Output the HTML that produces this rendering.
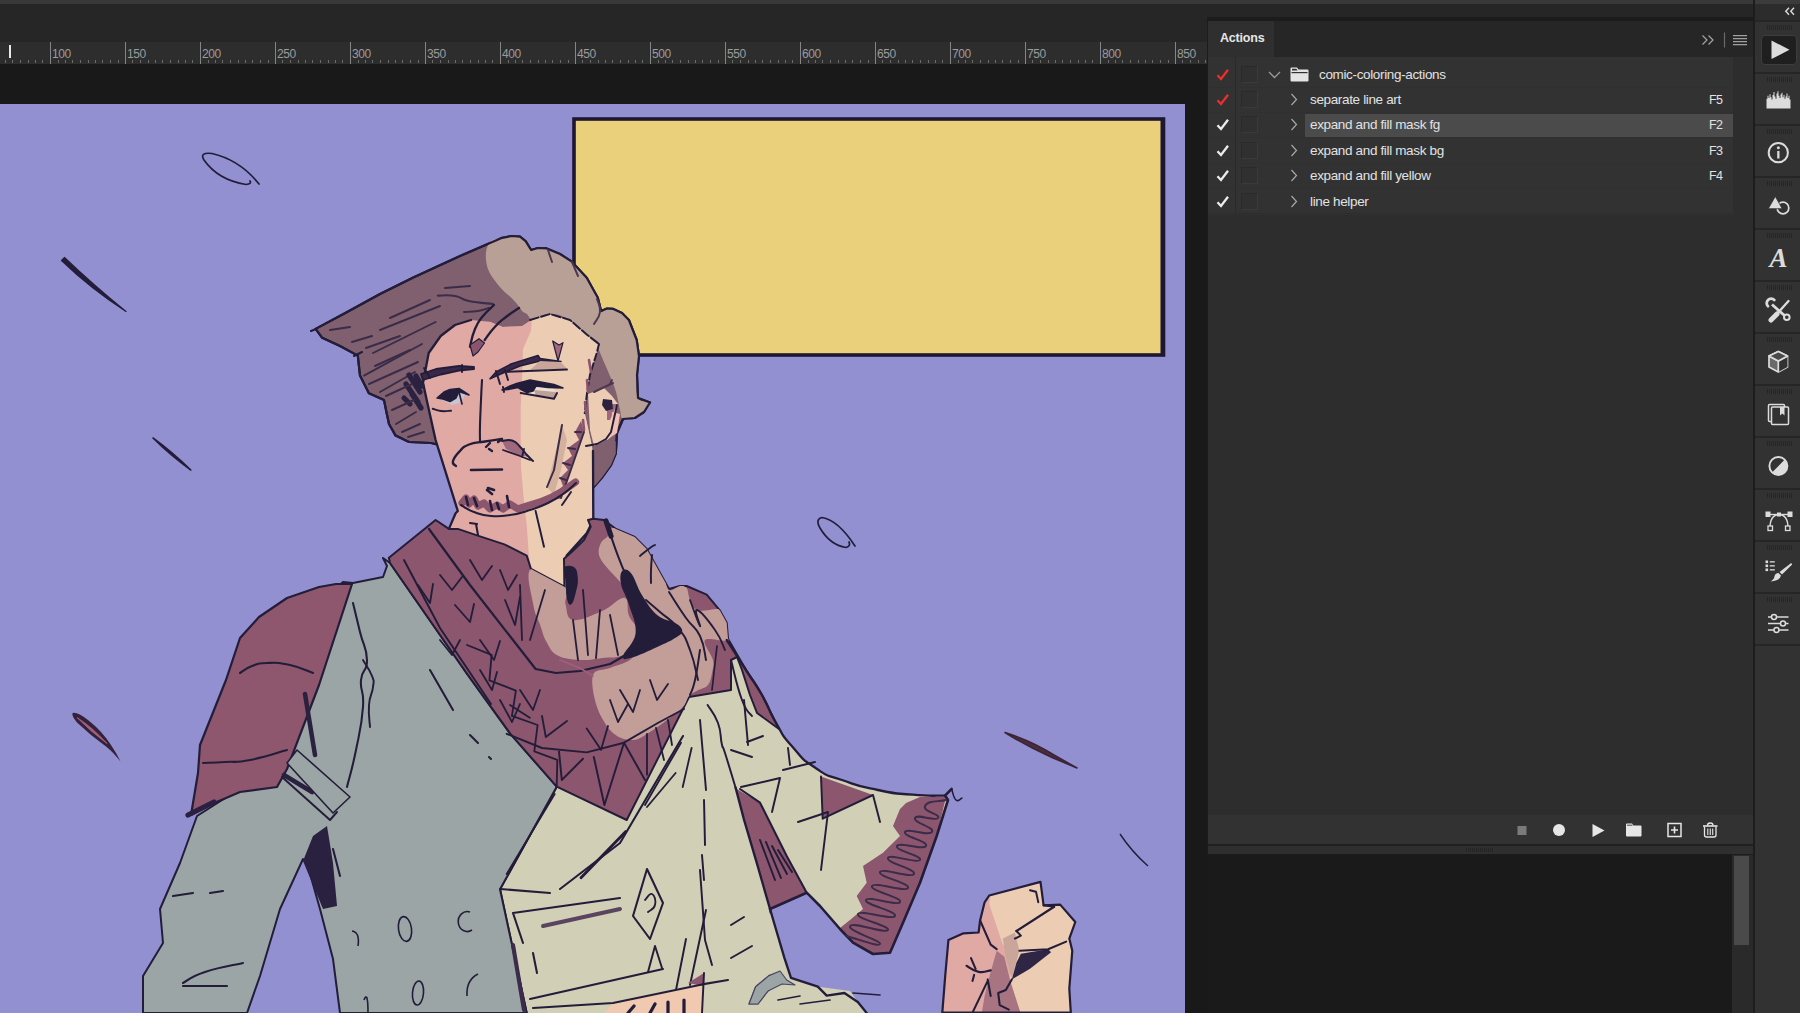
<!DOCTYPE html>
<html><head><meta charset="utf-8"><title>Actions</title>
<style>
*{box-sizing:border-box;margin:0;padding:0}
html,body{width:1800px;height:1013px;overflow:hidden;background:#262626;font-family:"Liberation Sans",sans-serif;}
.abs{position:absolute}
#root{position:relative;width:1800px;height:1013px;overflow:hidden;background:#262626}
#topstrip{left:0;top:0;width:1800px;height:4px;background:#393939}
#ruler{left:0;top:42px;width:1208px;height:22px;background:#2d2d2d;overflow:hidden}
#ruler .t{position:absolute;top:0px;width:1px;height:22px;background:#858585}
#ruler .n{position:absolute;top:5px;font-size:12px;color:#9c9c9c;letter-spacing:-0.4px;line-height:14px}
#ruler .dots{position:absolute;left:0;top:19px;width:1208px;height:2px}
#dark{left:0;top:64px;width:1208px;height:949px;background:#191919}
#canvas{left:0;top:104px;width:1185px;height:909px;background:#9290d1;overflow:hidden}
#panel{left:1208px;top:18px;width:1546px;height:836px}
</style></head><body><div id="root">
<div id="topstrip" class="abs"></div>
<div id="ruler" class="abs"><div class="abs" style="left:9px;top:3px;width:2px;height:13px;background:#e8e8e8"></div><div class="t" style="left:50px"></div><div class="n" style="left:52px">100</div><div class="t" style="left:125px"></div><div class="n" style="left:127px">150</div><div class="t" style="left:200px"></div><div class="n" style="left:202px">200</div><div class="t" style="left:275px"></div><div class="n" style="left:277px">250</div><div class="t" style="left:350px"></div><div class="n" style="left:352px">300</div><div class="t" style="left:425px"></div><div class="n" style="left:427px">350</div><div class="t" style="left:500px"></div><div class="n" style="left:502px">400</div><div class="t" style="left:575px"></div><div class="n" style="left:577px">450</div><div class="t" style="left:650px"></div><div class="n" style="left:652px">500</div><div class="t" style="left:725px"></div><div class="n" style="left:727px">550</div><div class="t" style="left:800px"></div><div class="n" style="left:802px">600</div><div class="t" style="left:875px"></div><div class="n" style="left:877px">650</div><div class="t" style="left:950px"></div><div class="n" style="left:952px">700</div><div class="t" style="left:1025px"></div><div class="n" style="left:1027px">750</div><div class="t" style="left:1100px"></div><div class="n" style="left:1102px">800</div><div class="t" style="left:1175px"></div><div class="n" style="left:1177px">850</div><div class="abs" style="left:5px;top:18px;width:1px;height:3px;background:#6c6c6c"></div><div class="abs" style="left:12px;top:18px;width:1px;height:3px;background:#6c6c6c"></div><div class="abs" style="left:20px;top:18px;width:1px;height:3px;background:#6c6c6c"></div><div class="abs" style="left:28px;top:18px;width:1px;height:3px;background:#6c6c6c"></div><div class="abs" style="left:35px;top:18px;width:1px;height:3px;background:#6c6c6c"></div><div class="abs" style="left:42px;top:18px;width:1px;height:3px;background:#6c6c6c"></div><div class="abs" style="left:58px;top:18px;width:1px;height:3px;background:#6c6c6c"></div><div class="abs" style="left:65px;top:18px;width:1px;height:3px;background:#6c6c6c"></div><div class="abs" style="left:72px;top:18px;width:1px;height:3px;background:#6c6c6c"></div><div class="abs" style="left:80px;top:18px;width:1px;height:3px;background:#6c6c6c"></div><div class="abs" style="left:88px;top:18px;width:1px;height:3px;background:#6c6c6c"></div><div class="abs" style="left:95px;top:18px;width:1px;height:3px;background:#6c6c6c"></div><div class="abs" style="left:102px;top:18px;width:1px;height:3px;background:#6c6c6c"></div><div class="abs" style="left:110px;top:18px;width:1px;height:3px;background:#6c6c6c"></div><div class="abs" style="left:118px;top:18px;width:1px;height:3px;background:#6c6c6c"></div><div class="abs" style="left:132px;top:18px;width:1px;height:3px;background:#6c6c6c"></div><div class="abs" style="left:140px;top:18px;width:1px;height:3px;background:#6c6c6c"></div><div class="abs" style="left:148px;top:18px;width:1px;height:3px;background:#6c6c6c"></div><div class="abs" style="left:155px;top:18px;width:1px;height:3px;background:#6c6c6c"></div><div class="abs" style="left:162px;top:18px;width:1px;height:3px;background:#6c6c6c"></div><div class="abs" style="left:170px;top:18px;width:1px;height:3px;background:#6c6c6c"></div><div class="abs" style="left:178px;top:18px;width:1px;height:3px;background:#6c6c6c"></div><div class="abs" style="left:185px;top:18px;width:1px;height:3px;background:#6c6c6c"></div><div class="abs" style="left:192px;top:18px;width:1px;height:3px;background:#6c6c6c"></div><div class="abs" style="left:208px;top:18px;width:1px;height:3px;background:#6c6c6c"></div><div class="abs" style="left:215px;top:18px;width:1px;height:3px;background:#6c6c6c"></div><div class="abs" style="left:222px;top:18px;width:1px;height:3px;background:#6c6c6c"></div><div class="abs" style="left:230px;top:18px;width:1px;height:3px;background:#6c6c6c"></div><div class="abs" style="left:238px;top:18px;width:1px;height:3px;background:#6c6c6c"></div><div class="abs" style="left:245px;top:18px;width:1px;height:3px;background:#6c6c6c"></div><div class="abs" style="left:252px;top:18px;width:1px;height:3px;background:#6c6c6c"></div><div class="abs" style="left:260px;top:18px;width:1px;height:3px;background:#6c6c6c"></div><div class="abs" style="left:268px;top:18px;width:1px;height:3px;background:#6c6c6c"></div><div class="abs" style="left:282px;top:18px;width:1px;height:3px;background:#6c6c6c"></div><div class="abs" style="left:290px;top:18px;width:1px;height:3px;background:#6c6c6c"></div><div class="abs" style="left:298px;top:18px;width:1px;height:3px;background:#6c6c6c"></div><div class="abs" style="left:305px;top:18px;width:1px;height:3px;background:#6c6c6c"></div><div class="abs" style="left:312px;top:18px;width:1px;height:3px;background:#6c6c6c"></div><div class="abs" style="left:320px;top:18px;width:1px;height:3px;background:#6c6c6c"></div><div class="abs" style="left:328px;top:18px;width:1px;height:3px;background:#6c6c6c"></div><div class="abs" style="left:335px;top:18px;width:1px;height:3px;background:#6c6c6c"></div><div class="abs" style="left:342px;top:18px;width:1px;height:3px;background:#6c6c6c"></div><div class="abs" style="left:358px;top:18px;width:1px;height:3px;background:#6c6c6c"></div><div class="abs" style="left:365px;top:18px;width:1px;height:3px;background:#6c6c6c"></div><div class="abs" style="left:372px;top:18px;width:1px;height:3px;background:#6c6c6c"></div><div class="abs" style="left:380px;top:18px;width:1px;height:3px;background:#6c6c6c"></div><div class="abs" style="left:388px;top:18px;width:1px;height:3px;background:#6c6c6c"></div><div class="abs" style="left:395px;top:18px;width:1px;height:3px;background:#6c6c6c"></div><div class="abs" style="left:402px;top:18px;width:1px;height:3px;background:#6c6c6c"></div><div class="abs" style="left:410px;top:18px;width:1px;height:3px;background:#6c6c6c"></div><div class="abs" style="left:418px;top:18px;width:1px;height:3px;background:#6c6c6c"></div><div class="abs" style="left:432px;top:18px;width:1px;height:3px;background:#6c6c6c"></div><div class="abs" style="left:440px;top:18px;width:1px;height:3px;background:#6c6c6c"></div><div class="abs" style="left:448px;top:18px;width:1px;height:3px;background:#6c6c6c"></div><div class="abs" style="left:455px;top:18px;width:1px;height:3px;background:#6c6c6c"></div><div class="abs" style="left:462px;top:18px;width:1px;height:3px;background:#6c6c6c"></div><div class="abs" style="left:470px;top:18px;width:1px;height:3px;background:#6c6c6c"></div><div class="abs" style="left:478px;top:18px;width:1px;height:3px;background:#6c6c6c"></div><div class="abs" style="left:485px;top:18px;width:1px;height:3px;background:#6c6c6c"></div><div class="abs" style="left:492px;top:18px;width:1px;height:3px;background:#6c6c6c"></div><div class="abs" style="left:508px;top:18px;width:1px;height:3px;background:#6c6c6c"></div><div class="abs" style="left:515px;top:18px;width:1px;height:3px;background:#6c6c6c"></div><div class="abs" style="left:522px;top:18px;width:1px;height:3px;background:#6c6c6c"></div><div class="abs" style="left:530px;top:18px;width:1px;height:3px;background:#6c6c6c"></div><div class="abs" style="left:538px;top:18px;width:1px;height:3px;background:#6c6c6c"></div><div class="abs" style="left:545px;top:18px;width:1px;height:3px;background:#6c6c6c"></div><div class="abs" style="left:552px;top:18px;width:1px;height:3px;background:#6c6c6c"></div><div class="abs" style="left:560px;top:18px;width:1px;height:3px;background:#6c6c6c"></div><div class="abs" style="left:568px;top:18px;width:1px;height:3px;background:#6c6c6c"></div><div class="abs" style="left:582px;top:18px;width:1px;height:3px;background:#6c6c6c"></div><div class="abs" style="left:590px;top:18px;width:1px;height:3px;background:#6c6c6c"></div><div class="abs" style="left:598px;top:18px;width:1px;height:3px;background:#6c6c6c"></div><div class="abs" style="left:605px;top:18px;width:1px;height:3px;background:#6c6c6c"></div><div class="abs" style="left:612px;top:18px;width:1px;height:3px;background:#6c6c6c"></div><div class="abs" style="left:620px;top:18px;width:1px;height:3px;background:#6c6c6c"></div><div class="abs" style="left:628px;top:18px;width:1px;height:3px;background:#6c6c6c"></div><div class="abs" style="left:635px;top:18px;width:1px;height:3px;background:#6c6c6c"></div><div class="abs" style="left:642px;top:18px;width:1px;height:3px;background:#6c6c6c"></div><div class="abs" style="left:658px;top:18px;width:1px;height:3px;background:#6c6c6c"></div><div class="abs" style="left:665px;top:18px;width:1px;height:3px;background:#6c6c6c"></div><div class="abs" style="left:672px;top:18px;width:1px;height:3px;background:#6c6c6c"></div><div class="abs" style="left:680px;top:18px;width:1px;height:3px;background:#6c6c6c"></div><div class="abs" style="left:688px;top:18px;width:1px;height:3px;background:#6c6c6c"></div><div class="abs" style="left:695px;top:18px;width:1px;height:3px;background:#6c6c6c"></div><div class="abs" style="left:702px;top:18px;width:1px;height:3px;background:#6c6c6c"></div><div class="abs" style="left:710px;top:18px;width:1px;height:3px;background:#6c6c6c"></div><div class="abs" style="left:718px;top:18px;width:1px;height:3px;background:#6c6c6c"></div><div class="abs" style="left:732px;top:18px;width:1px;height:3px;background:#6c6c6c"></div><div class="abs" style="left:740px;top:18px;width:1px;height:3px;background:#6c6c6c"></div><div class="abs" style="left:748px;top:18px;width:1px;height:3px;background:#6c6c6c"></div><div class="abs" style="left:755px;top:18px;width:1px;height:3px;background:#6c6c6c"></div><div class="abs" style="left:762px;top:18px;width:1px;height:3px;background:#6c6c6c"></div><div class="abs" style="left:770px;top:18px;width:1px;height:3px;background:#6c6c6c"></div><div class="abs" style="left:778px;top:18px;width:1px;height:3px;background:#6c6c6c"></div><div class="abs" style="left:785px;top:18px;width:1px;height:3px;background:#6c6c6c"></div><div class="abs" style="left:792px;top:18px;width:1px;height:3px;background:#6c6c6c"></div><div class="abs" style="left:808px;top:18px;width:1px;height:3px;background:#6c6c6c"></div><div class="abs" style="left:815px;top:18px;width:1px;height:3px;background:#6c6c6c"></div><div class="abs" style="left:822px;top:18px;width:1px;height:3px;background:#6c6c6c"></div><div class="abs" style="left:830px;top:18px;width:1px;height:3px;background:#6c6c6c"></div><div class="abs" style="left:838px;top:18px;width:1px;height:3px;background:#6c6c6c"></div><div class="abs" style="left:845px;top:18px;width:1px;height:3px;background:#6c6c6c"></div><div class="abs" style="left:852px;top:18px;width:1px;height:3px;background:#6c6c6c"></div><div class="abs" style="left:860px;top:18px;width:1px;height:3px;background:#6c6c6c"></div><div class="abs" style="left:868px;top:18px;width:1px;height:3px;background:#6c6c6c"></div><div class="abs" style="left:882px;top:18px;width:1px;height:3px;background:#6c6c6c"></div><div class="abs" style="left:890px;top:18px;width:1px;height:3px;background:#6c6c6c"></div><div class="abs" style="left:898px;top:18px;width:1px;height:3px;background:#6c6c6c"></div><div class="abs" style="left:905px;top:18px;width:1px;height:3px;background:#6c6c6c"></div><div class="abs" style="left:912px;top:18px;width:1px;height:3px;background:#6c6c6c"></div><div class="abs" style="left:920px;top:18px;width:1px;height:3px;background:#6c6c6c"></div><div class="abs" style="left:928px;top:18px;width:1px;height:3px;background:#6c6c6c"></div><div class="abs" style="left:935px;top:18px;width:1px;height:3px;background:#6c6c6c"></div><div class="abs" style="left:942px;top:18px;width:1px;height:3px;background:#6c6c6c"></div><div class="abs" style="left:958px;top:18px;width:1px;height:3px;background:#6c6c6c"></div><div class="abs" style="left:965px;top:18px;width:1px;height:3px;background:#6c6c6c"></div><div class="abs" style="left:972px;top:18px;width:1px;height:3px;background:#6c6c6c"></div><div class="abs" style="left:980px;top:18px;width:1px;height:3px;background:#6c6c6c"></div><div class="abs" style="left:988px;top:18px;width:1px;height:3px;background:#6c6c6c"></div><div class="abs" style="left:995px;top:18px;width:1px;height:3px;background:#6c6c6c"></div><div class="abs" style="left:1002px;top:18px;width:1px;height:3px;background:#6c6c6c"></div><div class="abs" style="left:1010px;top:18px;width:1px;height:3px;background:#6c6c6c"></div><div class="abs" style="left:1018px;top:18px;width:1px;height:3px;background:#6c6c6c"></div><div class="abs" style="left:1032px;top:18px;width:1px;height:3px;background:#6c6c6c"></div><div class="abs" style="left:1040px;top:18px;width:1px;height:3px;background:#6c6c6c"></div><div class="abs" style="left:1048px;top:18px;width:1px;height:3px;background:#6c6c6c"></div><div class="abs" style="left:1055px;top:18px;width:1px;height:3px;background:#6c6c6c"></div><div class="abs" style="left:1062px;top:18px;width:1px;height:3px;background:#6c6c6c"></div><div class="abs" style="left:1070px;top:18px;width:1px;height:3px;background:#6c6c6c"></div><div class="abs" style="left:1078px;top:18px;width:1px;height:3px;background:#6c6c6c"></div><div class="abs" style="left:1085px;top:18px;width:1px;height:3px;background:#6c6c6c"></div><div class="abs" style="left:1092px;top:18px;width:1px;height:3px;background:#6c6c6c"></div><div class="abs" style="left:1108px;top:18px;width:1px;height:3px;background:#6c6c6c"></div><div class="abs" style="left:1115px;top:18px;width:1px;height:3px;background:#6c6c6c"></div><div class="abs" style="left:1122px;top:18px;width:1px;height:3px;background:#6c6c6c"></div><div class="abs" style="left:1130px;top:18px;width:1px;height:3px;background:#6c6c6c"></div><div class="abs" style="left:1138px;top:18px;width:1px;height:3px;background:#6c6c6c"></div><div class="abs" style="left:1145px;top:18px;width:1px;height:3px;background:#6c6c6c"></div><div class="abs" style="left:1152px;top:18px;width:1px;height:3px;background:#6c6c6c"></div><div class="abs" style="left:1160px;top:18px;width:1px;height:3px;background:#6c6c6c"></div><div class="abs" style="left:1168px;top:18px;width:1px;height:3px;background:#6c6c6c"></div><div class="abs" style="left:1182px;top:18px;width:1px;height:3px;background:#6c6c6c"></div><div class="abs" style="left:1190px;top:18px;width:1px;height:3px;background:#6c6c6c"></div><div class="abs" style="left:1198px;top:18px;width:1px;height:3px;background:#6c6c6c"></div><div class="abs" style="left:1205px;top:18px;width:1px;height:3px;background:#6c6c6c"></div></div>
<div id="dark" class="abs"></div>
<div id="canvas" class="abs"><svg width="1185" height="909" viewBox="0 104 1185 909" style="position:absolute;left:0;top:0">
<rect x="574" y="119" width="589.5" height="236" fill="#ebd07b" stroke="#1d1733" stroke-width="3.6"/><rect x="1160.5" y="119" width="4.5" height="236" fill="#1d1733"/>
<path d="M556.7 786.7L500 889.3L526.7 1013L866 1013L850 991L813 986L786.7 976L770 909L806.7 892.7L840 929L873 953L890 953L920 883L947 803L945.0 795.6C934.3 795.3 935.4 796.6 913.0 794.7C890.6 792.8 901.5 794.9 877.8 790.0C854.1 785.1 862.7 787.3 842.0 780.0C821.3 772.7 832.1 779.1 815.6 768.0C799.1 756.9 805.5 761.5 792.4 746.7C779.3 731.9 786.5 740.8 776.4 723.6C766.3 706.4 772.1 712.9 762.0 695.0C751.9 677.1 757.8 688.3 746.0 670.0C734.2 651.7 733.1 650.0 726.7 640.0L700 680L683 706.7L626.7 820Z" fill="#d1cfb6"/>
<polyline points="556.7,786.7 500.0,889.3 526.7,1013.0" fill="none" stroke="#231d3a" stroke-width="2.08" stroke-linecap="round" stroke-linejoin="round" />
<polygon points="390.0,563.0 466.7,673.3 510.0,733.3 556.7,786.7 500.0,889.3 526.7,1013.0 340.0,1013.0 333.0,959.0 320.0,909.0 307.0,863.0 303.0,859.0 280.0,909.0 260.0,976.0 247.0,1013.0 143.0,1013.0 143.0,976.0 163.0,943.0 160.0,909.0 180.0,863.0 197.0,816.0 230.0,795.0 300.0,620.0 343.0,582.0 353.0,583.0 383.0,577.0 387.0,566.0 383.0,558.0" fill="#9ba5a5" stroke="#231d3a" stroke-width="2" stroke-linejoin="round" />
<polygon points="327.0,826.0 333.0,863.0 337.0,906.0 323.0,909.0 303.0,861.0 313.0,836.0" fill="#2a2140" />
<polygon points="352.0,584.0 336.0,584.0 319.0,587.0 287.0,598.0 259.0,617.0 240.0,638.0 226.0,680.0 212.0,715.0 200.0,745.0 198.0,773.0 191.0,815.0 212.0,804.0 240.0,792.0 277.0,787.0 287.0,769.0 319.0,685.0" fill="#8e576d" stroke="#231d3a" stroke-width="2.2" stroke-linejoin="round" />
<path d="M240.0 673.0C243.2 671.1 244.8 668.7 252.0 666.0C259.2 663.3 256.9 663.3 267.0 663.0C277.1 662.7 277.7 662.3 290.0 665.0C302.3 667.7 306.9 670.9 313.0 673.0" fill="none" stroke="#231d3a" stroke-width="2.08" stroke-linecap="round" stroke-linejoin="round" />
<path d="M203.0 763.0C208.9 762.7 212.5 762.8 225.0 762.0C237.5 761.2 233.5 763.2 250.0 760.0C266.5 756.8 277.1 752.7 287.0 750.0" fill="none" stroke="#231d3a" stroke-width="2.08" stroke-linecap="round" stroke-linejoin="round" />
<path d="M188.0 815.0L214.0 802.0" fill="none" stroke="#2a2140" stroke-width="5.2" stroke-linecap="round"/>
<path d="M305.0 694.0L315.0 755.0M284.0 775.0L312.0 792.0" fill="none" stroke="#2a2140" stroke-width="4.55" stroke-linecap="round"/>
<polygon points="297.0,750.0 350.0,797.0 333.0,813.0 287.0,763.0" fill="#9ba5a5" stroke="#231d3a" stroke-width="1.6" stroke-linejoin="round" />
<path d="M282.0 777.0L330.0 820.0M330.0 820.0L337.0 812.0" fill="none" stroke="#231d3a" stroke-width="1.9500000000000002" stroke-linecap="round"/>
<path d="M353.0 603.0C354.9 610.7 356.3 616.8 360.0 632.0C363.7 647.2 366.7 647.2 367.0 660.0C367.3 672.8 362.1 667.5 361.0 680.0C359.9 692.5 364.3 688.3 363.0 707.0C361.7 725.7 360.3 728.7 356.0 750.0C351.7 771.3 349.4 777.1 347.0 787.0" fill="none" stroke="#231d3a" stroke-width="2.08" stroke-linecap="round" stroke-linejoin="round" />
<path d="M363.0 660.0C365.4 664.3 369.3 668.8 372.0 676.0C374.7 683.2 373.8 679.3 373.0 687.0C372.2 694.7 369.8 694.3 369.0 705.0C368.2 715.7 369.7 721.1 370.0 727.0" fill="none" stroke="#231d3a" stroke-width="1.9500000000000002" stroke-linecap="round" stroke-linejoin="round" />
<path d="M430.0 670.0L453.0 710.0M470.0 735.0L478.0 743.0M489.0 757.0L491.0 759.0M333.0 849.0L340.0 876.0" fill="none" stroke="#231d3a" stroke-width="2.08" stroke-linecap="round"/>
<path d="M173.0 896.0L193.0 893.0M210.0 893.0L223.0 891.0M183.0 986.0L227.0 986.0" fill="none" stroke="#231d3a" stroke-width="2.08" stroke-linecap="round"/>
<path d="M183.0 983.0C188.9 980.1 189.0 977.3 205.0 972.0C221.0 966.7 232.9 965.4 243.0 963.0" fill="none" stroke="#231d3a" stroke-width="2.08" stroke-linecap="round" stroke-linejoin="round" />
<g fill="none" stroke="#231d3a" stroke-width="1.600"><ellipse cx="405" cy="929" rx="6.500" ry="12.500" transform="rotate(-8 405 929)"/><ellipse cx="418" cy="993" rx="5.500" ry="12" transform="rotate(5 418 993)"/><path d="M470 912 A9 10 0 1 0 472 930"/><path d="M478 974 Q466 980 467 996"/><path d="M352 931 Q360 932 358 946"/><path d="M364 1000 Q368 990 368 1013"/></g>
<polygon points="315.6,328.9 346.7,312.3 380.0,294.0 413.3,277.5 460.0,256.0 502.2,237.8 512.0,236.0 520.0,236.7 525.6,241.1 531.1,250.0 538.0,248.0 546.7,248.4 560.0,254.0 571.1,261.1 586.7,277.8 597.8,297.8 601.1,311.1 607.0,308.5 613.3,308.9 622.0,313.0 628.9,320.0 636.7,340.0 639.0,356.0 637.0,375.0 638.0,398.0 650.0,402.5 644.0,412.0 634.8,418.0 623.0,419.0 617.0,433.0 615.8,453.5 611.0,465.0 601.6,478.0 592.0,489.0 500.0,460.0 431.0,443.0 409.0,442.0 395.6,435.6 389.0,424.0 386.0,410.0 384.0,400.0 368.9,393.3 360.0,375.6 357.8,355.6 340.0,346.0 322.2,337.8" fill="#80606e" stroke="#231d3a" stroke-width="2.2" stroke-linejoin="round" />
<path d="M488.9 243.3C492.0 238.0 497.6 239.3 502.2 237.8C506.8 236.3 508.4 236.2 512.0 236.0C515.6 235.8 517.3 235.7 520.0 236.7C522.7 237.7 523.4 238.4 525.6 241.1C527.8 243.8 528.6 248.6 531.1 250.0C533.6 251.4 534.9 248.3 538.0 248.0C541.1 247.7 542.3 247.2 546.7 248.4C551.1 249.6 555.1 251.5 560.0 254.0C564.9 256.5 565.8 256.3 571.1 261.1C576.4 265.9 581.4 270.5 586.7 277.8C592.0 285.1 594.9 291.1 597.8 297.8C600.7 304.5 599.3 309.0 601.1 311.1C602.9 313.2 604.6 308.9 607.0 308.5C609.4 308.1 610.3 308.0 613.3 308.9C616.3 309.8 618.9 310.8 622.0 313.0C625.1 315.2 626.0 314.6 628.9 320.0C631.8 325.4 634.7 332.8 636.7 340.0C638.7 347.2 638.9 349.0 639.0 356.0C639.1 363.0 637.2 366.6 637.0 375.0C636.8 383.4 635.4 392.5 638.0 398.0C640.6 403.5 648.8 399.7 650.0 402.5C651.2 405.3 647.0 408.9 644.0 412.0C641.0 415.1 639.0 416.6 634.8 418.0C630.6 419.4 626.0 420.6 623.0 419.0C620.0 417.4 621.4 415.4 620.0 410.0C618.6 404.6 618.0 398.8 616.0 392.0C614.0 385.2 613.4 384.4 610.0 376.0C606.6 367.6 601.2 356.4 599.0 350.0C596.8 343.6 601.4 347.1 599.0 344.0C596.6 340.9 592.8 339.5 587.0 334.7C581.2 329.9 577.4 324.1 570.0 320.0C562.6 315.9 558.0 314.0 550.0 314.0C542.0 314.0 534.7 319.2 530.0 320.0C525.3 320.8 529.6 321.4 526.7 317.8C523.8 314.2 521.4 308.9 515.6 302.2C509.8 295.5 503.6 292.0 497.8 284.4C492.0 276.8 488.5 272.6 486.7 264.4C484.9 256.2 485.8 248.6 488.9 243.3Z" fill="#b9a096" />
<polygon points="315.6,328.9 346.7,312.3 380.0,294.0 413.3,277.5 460.0,256.0 502.2,237.8 512.0,236.0 520.0,236.7 525.6,241.1 531.1,250.0 538.0,248.0 546.7,248.4 560.0,254.0 571.1,261.1 586.7,277.8 597.8,297.8 601.1,311.1 607.0,308.5 613.3,308.9 622.0,313.0 628.9,320.0 636.7,340.0 639.0,356.0 637.0,375.0 638.0,398.0 650.0,402.5 644.0,412.0 634.8,418.0 623.0,419.0 617.0,433.0 615.8,453.5 611.0,465.0 601.6,478.0 592.0,489.0 500.0,460.0 431.0,443.0 409.0,442.0 395.6,435.6 389.0,424.0 386.0,410.0 384.0,400.0 368.9,393.3 360.0,375.6 357.8,355.6 340.0,346.0 322.2,337.8" fill="none" stroke="#231d3a" stroke-width="2.2" stroke-linejoin="round" />
<clipPath id="fc"><polygon points="423.0,382.7 428.7,353.0 440.7,336.0 455.0,325.0 471.0,320.0 492.0,322.0 503.0,326.7 527.0,320.0 550.0,314.0 570.0,320.0 587.0,334.7 599.0,344.0 596.7,353.0 590.0,374.7 587.0,393.0 584.7,413.0 586.7,422.0 593.0,451.0 593.3,520.0 586.7,533.3 566.7,555.6 564.4,586.7 531.0,569.0 526.7,555.6 504.4,544.4 477.8,535.6 457.8,528.9 448.9,528.9 455.6,513.3 457.8,511.0 435.6,440.0 426.7,400.0"/></clipPath>
<polygon points="423.0,382.7 428.7,353.0 440.7,336.0 455.0,325.0 471.0,320.0 492.0,322.0 503.0,326.7 527.0,320.0 550.0,314.0 570.0,320.0 587.0,334.7 599.0,344.0 596.7,353.0 590.0,374.7 587.0,393.0 584.7,413.0 586.7,422.0 593.0,451.0 593.3,520.0 586.7,533.3 566.7,555.6 564.4,586.7 531.0,569.0 526.7,555.6 504.4,544.4 477.8,535.6 457.8,528.9 448.9,528.9 455.6,513.3 457.8,511.0 435.6,440.0 426.7,400.0" fill="#e0a9a4" />
<polygon points="532.0,316.0 531.0,330.7 523.0,349.0 522.0,380.0 520.7,406.7 520.7,433.0 521.0,466.7 524.4,506.7 526.7,524.4 528.9,555.6 531.0,569.0 570.0,595.0 610.0,560.0 610.0,310.0" fill="#eccdb4" clip-path="url(#fc)"/>
<polygon points="588.0,394.0 604.0,388.0 612.0,396.0 618.0,404.0 614.0,420.0 611.0,437.0 606.0,441.0 594.0,446.0 590.0,430.0" fill="#eccdb4" />
<polygon points="607.0,404.0 617.0,404.0 610.0,420.0 607.0,420.0" fill="#a0687c" />
<polygon points="612.0,412.0 620.0,414.0 617.0,433.0 611.0,437.0" fill="#f3bfb4" />
<polygon points="594.0,447.0 606.0,440.0 615.8,441.6 615.8,453.5 611.0,465.0 601.6,478.0 592.0,489.0 592.5,447.0" fill="#80606e" />
<polyline points="586.0,446.0 597.0,444.0 606.0,439.0 611.0,432.0 617.0,405.0" fill="none" stroke="#231d3a" stroke-width="1.9500000000000002" stroke-linecap="round" stroke-linejoin="round" />
<polygon points="603.0,399.0 612.0,400.0 613.0,409.0 606.0,411.0 602.0,405.0" fill="#2c2240" />
<polygon points="471.0,318.0 480.7,317.0 492.7,322.7 503.0,326.7 522.0,326.0 531.0,320.0 527.0,314.0 500.0,300.0 470.0,300.0" fill="#80606e" />
<polyline points="471.0,320.0 455.0,325.0 440.7,336.0 428.7,353.0 423.0,382.7 426.7,400.0 435.6,440.0 457.8,511.0 455.6,513.3 448.9,528.9" fill="none" stroke="#231d3a" stroke-width="2.3400000000000003" stroke-linecap="round" stroke-linejoin="round" />
<polyline points="530.0,320.0 550.0,314.0 570.0,320.0 587.0,334.7 599.0,344.0" fill="none" stroke="#231d3a" stroke-width="1.9500000000000002" stroke-linecap="round" stroke-linejoin="round" stroke-dasharray="9 2.5"/>
<polyline points="599.0,344.0 596.7,353.0 590.0,374.7 587.0,393.0 584.7,413.0" fill="none" stroke="#231d3a" stroke-width="1.9500000000000002" stroke-linecap="round" stroke-linejoin="round" stroke-dasharray="7 3"/>
<polyline points="593.0,451.0 593.3,520.0 586.7,533.3 566.7,555.6" fill="none" stroke="#231d3a" stroke-width="2.3400000000000003" stroke-linecap="round" stroke-linejoin="round" />
<path d="M437.8 295.6C442.4 295.7 446.7 294.6 455.0 296.0C463.3 297.4 458.8 298.9 468.9 301.0C479.0 303.1 486.6 303.2 493.0 304.0" fill="none" stroke="#3c2d4a" stroke-width="2.08" stroke-linecap="round" stroke-linejoin="round" />
<path d="M464.0 312.0C467.7 311.7 471.3 312.1 478.0 311.0C484.7 309.9 486.1 308.7 489.0 307.8" fill="none" stroke="#3c2d4a" stroke-width="1.8199999999999998" stroke-linecap="round" stroke-linejoin="round" />
<path d="M494.0 305.0C491.1 307.9 488.1 309.6 483.0 316.0C477.9 322.4 478.5 320.8 475.0 329.0C471.5 337.2 471.3 342.0 470.0 346.7" fill="none" stroke="#231d3a" stroke-width="2.3400000000000003" stroke-linecap="round" stroke-linejoin="round" />
<path d="M519.0 308.0C515.5 310.4 512.4 312.0 506.0 317.0C499.6 322.0 500.7 320.6 495.0 326.7C489.3 332.8 487.4 336.5 484.7 340.0" fill="none" stroke="#231d3a" stroke-width="2.3400000000000003" stroke-linecap="round" stroke-linejoin="round" />
<polygon points="470.0,345.0 479.0,338.7 484.5,343.0 478.0,352.0 473.0,356.0" fill="#8b566d" stroke="#231d3a" stroke-width="1.2" stroke-linejoin="round" />
<path d="M373.0 353.0L435.6 322.0M364.0 375.6L422.0 344.0M369.0 384.0L418.0 362.0M380.0 392.0L415.0 372.0M352.0 342.0L372.0 336.0M396.0 424.0L416.0 412.0M402.0 432.0L420.0 424.0M408.0 437.0L424.0 432.0" fill="none" stroke="#3a2c48" stroke-width="1.9500000000000002" stroke-linecap="round"/>
<path d="M409.0 375.0L420.0 392.0M406.0 384.0L418.0 402.0M412.0 394.0L421.0 408.0M404.0 398.0L410.0 404.0M416.0 376.0L422.0 386.0" fill="none" stroke="#2b2140" stroke-width="5.2" stroke-linecap="round"/>
<path d="M548.0 250.0L552.0 262.0M572.0 262.0L578.0 276.0" fill="none" stroke="#4a3850" stroke-width="1.9500000000000002" stroke-linecap="round"/>
<path d="M597.0 299.0C597.8 302.5 600.8 305.3 600.0 312.0C599.2 318.7 595.6 320.8 594.0 324.0" fill="none" stroke="#4a3850" stroke-width="1.9500000000000002" stroke-linecap="round" stroke-linejoin="round" />
<path d="M594.0 392.0L613.0 383.0M610.0 384.0L612.0 380.0" fill="none" stroke="#4a3850" stroke-width="1.9500000000000002" stroke-linecap="round"/>
<path d="M589.0 360.0L591.0 372.0M587.0 380.0L588.0 392.0M585.0 402.0L586.0 412.0M583.0 420.0L584.0 430.0" fill="none" stroke="#8b566d" stroke-width="2.6" stroke-linecap="round"/>
<path d="M421 374 L436 369 L459 366 L474 367 L474 369 L459 370.500 L441 374.500 L423 380 Z" fill="#3a2848" stroke="#231d3a" stroke-width="1.800" stroke-linejoin="round"/>
<path d="M424.0 368.0L430.0 378.0M462.0 365.0L462.0 372.0" fill="none" stroke="#231d3a" stroke-width="1.9500000000000002" stroke-linecap="round"/>
<path d="M490 378.700 L496 372 L511 364 L538 355.500 L540 358.500 L561 361.500 L540 361 L520 366 L503 373 Z" fill="#3a2848" stroke="#231d3a" stroke-width="1.600" stroke-linejoin="round"/>
<polygon points="540.0,361.0 561.0,362.0 567.0,369.0 530.0,370.0" fill="#c9a59a" />
<path d="M503.0 372.0L567.0 369.5M496.0 371.0L500.0 384.0M505.0 370.0L508.0 380.0" fill="none" stroke="#231d3a" stroke-width="1.9500000000000002" stroke-linecap="round"/>
<polygon points="552.7,341.0 558.0,361.0 563.0,342.7 559.0,345.0" fill="#a0687c" stroke="#231d3a" stroke-width="1.2" stroke-linejoin="round" />
<polygon points="440.0,398.0 447.0,391.5 459.0,389.5 466.0,394.0 460.0,403.0 452.0,405.0 444.0,401.0" fill="#c8c4d0" />
<path d="M437 398 L444 392 L450 389.500 L459 388.500 L469 395 L459 391.500 L456 398 L450 401.500 L443 399 Z" fill="#231d3a" stroke="#231d3a" stroke-width="1.500" stroke-linejoin="round"/>
<path d="M432.7 408.7C434.9 409.3 436.1 410.5 441.0 411.0C445.9 411.5 448.3 410.8 451.0 410.7" fill="none" stroke="#231d3a" stroke-width="1.9500000000000002" stroke-linecap="round" stroke-linejoin="round" />
<path d="M459.0 392.0L462.0 404.0" fill="none" stroke="#231d3a" stroke-width="1.6900000000000002" stroke-linecap="round"/>
<polygon points="523.0,386.0 534.0,383.0 552.0,386.5 556.0,392.5 540.0,396.0 528.0,394.0" fill="#e8e2d6" />
<polygon points="534.0,390.0 556.0,392.0 554.0,398.0 536.0,396.0" fill="#bfa096" />
<path d="M502 390 L510 386 L516.700 383.500 L530 380 L554 384.500 L563 388 L548 387.500 L536 386 L533 391 L527 392.500 L522 390 L518 387.500 L508 389.500 Z" fill="#231d3a" stroke="#231d3a" stroke-width="1.500" stroke-linejoin="round"/>
<path d="M520.7 393.0L554.0 398.7M554.0 398.7L557.0 393.0M503.0 387.0L504.0 392.0" fill="none" stroke="#231d3a" stroke-width="1.9500000000000002" stroke-linecap="round"/>
<path d="M482.0 380.0C481.7 385.3 481.5 388.0 481.0 400.0C480.5 412.0 480.3 414.1 480.0 425.0C479.7 435.9 480.0 436.7 480.0 441.0" fill="none" stroke="#231d3a" stroke-width="2.08" stroke-linecap="round" stroke-linejoin="round" />
<polygon points="502.0,441.0 512.0,440.5 520.0,446.7 529.0,457.0 518.0,455.0 506.0,449.0" fill="#a0687c" />
<path d="M456.0 466.0C455.2 464.7 451.9 465.0 453.0 461.0C454.1 457.0 455.7 455.4 460.0 451.0C464.3 446.6 462.3 447.0 469.0 444.5C475.7 442.0 476.2 443.0 485.0 441.5C493.8 440.0 497.5 439.7 502.0 439.0" fill="none" stroke="#231d3a" stroke-width="2.3400000000000003" stroke-linecap="round" stroke-linejoin="round" />
<path d="M502.0 439.0L498.0 442.0M490.0 443.0L486.0 447.0M489.0 449.0L492.0 451.0" fill="none" stroke="#231d3a" stroke-width="2.3400000000000003" stroke-linecap="round"/>
<path d="M502.0 441.0C504.7 440.9 507.2 439.0 512.0 440.5C516.8 442.0 516.0 442.8 520.0 446.7C524.0 450.6 523.5 451.2 527.0 455.0C530.5 458.8 531.4 459.4 533.0 461.0" fill="none" stroke="#231d3a" stroke-width="1.9500000000000002" stroke-linecap="round" stroke-linejoin="round" />
<path d="M503.0 450.0L520.0 456.0M520.0 456.0L530.0 460.0M524.0 449.0L522.0 457.0" fill="none" stroke="#231d3a" stroke-width="1.8199999999999998" stroke-linecap="round"/>
<path d="M471.0 470.0L502.0 469.5" fill="none" stroke="#231d3a" stroke-width="2.6" stroke-linecap="round"/>
<polygon points="562.0,425.0 567.0,440.0 561.0,470.0 554.0,495.0 547.0,487.0" fill="#d4b09e" />
<polygon points="581.0,421.0 584.0,432.0 561.0,498.5 553.0,500.0 556.0,492.0 563.0,486.0 560.0,478.0 568.0,470.0 563.0,463.0 572.0,456.0 568.0,448.0 579.0,440.0 575.0,432.0" fill="#8b566d" />
<path d="M562.0 425.0L554.0 470.0M554.0 470.0L547.0 487.0M584.0 432.0L561.0 498.0M575.0 432.0L581.0 432.0M568.0 448.0L575.0 449.0M563.0 463.0L570.0 465.0M560.0 478.0L566.0 480.0" fill="none" stroke="#3a2c48" stroke-width="1.9500000000000002" stroke-linecap="round"/>
<polyline points="462.0,503.0 466.0,498.0 469.0,504.0 474.0,499.0 478.0,506.0 484.0,503.0 490.0,509.0 497.0,505.0 503.0,509.0 510.0,504.0 518.0,509.0 527.0,506.0 540.0,502.0 552.0,497.0 563.0,491.0 575.6,482.0" fill="none" stroke="#8b566d" stroke-width="7.15" stroke-linecap="round" stroke-linejoin="round" />
<path d="M461.0 505.0C464.5 506.9 466.0 509.1 474.0 512.0C482.0 514.9 481.4 515.2 491.0 516.0C500.6 516.8 499.6 516.6 510.0 515.0C520.4 513.4 519.9 513.2 530.0 510.0C540.1 506.8 539.2 507.3 548.0 503.0C556.8 498.7 555.5 499.3 563.0 494.0C570.5 488.7 572.5 485.9 576.0 483.0" fill="none" stroke="#231d3a" stroke-width="2.08" stroke-linecap="round" stroke-linejoin="round" />
<path d="M466.0 497.0L468.0 505.0M474.0 498.0L477.0 506.0M490.0 501.0L492.0 510.0M497.0 503.0L499.0 509.0M507.0 496.0L509.0 507.0M487.0 490.0L492.0 494.0M488.0 488.0L494.0 490.0" fill="none" stroke="#231d3a" stroke-width="2.6" stroke-linecap="round"/>
<path d="M535.6 511.0L544.0 546.7M571.0 492.0L562.0 505.0" fill="none" stroke="#231d3a" stroke-width="1.9500000000000002" stroke-linecap="round"/>
<path d="M476.0 524.0L478.0 535.0M470.0 523.0L477.0 524.0" fill="none" stroke="#231d3a" stroke-width="2.08" stroke-linecap="round"/>
<path d="M390.0 318.0L430.0 300.0M380.0 330.0L440.0 306.0M366.0 348.0L400.0 336.0M375.0 366.0L410.0 350.0M386.0 396.0L412.0 384.0M392.0 410.0L414.0 400.0M445.0 288.0L470.0 286.0M330.0 330.0L350.0 327.0" fill="none" stroke="#3a2c48" stroke-width="1.9500000000000002" stroke-linecap="round"/>
<path d="M311.0 331.0L316.0 329.0M354.0 356.0L362.0 352.0" fill="none" stroke="#231d3a" stroke-width="2.08" stroke-linecap="round"/>
<polygon points="435.6,520.0 448.9,528.9 457.8,528.9 477.8,535.6 504.4,544.4 526.7,555.6 531.0,569.0 564.4,586.7 564.0,558.7 573.0,550.7 584.0,540.0 590.7,526.7 588.0,520.0 593.3,518.7 604.0,520.0 616.0,529.0 634.7,537.0 646.7,549.0 661.0,574.7 669.0,589.0 680.0,586.0 686.7,586.0 706.7,594.7 720.0,610.7 726.7,622.7 728.0,638.7 746.0,670.0 762.0,695.0 776.4,723.6 779.0,729.0 757.0,713.0 750.0,695.0 742.0,670.0 737.0,657.0 731.0,660.0 731.0,690.0 707.0,694.0 689.0,697.0 684.0,707.0 626.7,820.0 556.7,786.7 510.0,733.3 466.7,673.3 390.0,563.0 388.9,557.8" fill="#8c566e" stroke="#231d3a" stroke-width="2" stroke-linejoin="round" />
<clipPath id="sc"><polygon points="435.6,520.0 448.9,528.9 457.8,528.9 477.8,535.6 504.4,544.4 526.7,555.6 531.0,569.0 564.4,586.7 564.0,558.7 573.0,550.7 584.0,540.0 590.7,526.7 588.0,520.0 593.3,518.7 604.0,520.0 616.0,529.0 634.7,537.0 646.7,549.0 661.0,574.7 669.0,589.0 680.0,586.0 686.7,586.0 706.7,594.7 720.0,610.7 726.7,622.7 728.0,638.7 746.0,670.0 762.0,695.0 776.4,723.6 779.0,729.0 757.0,713.0 750.0,695.0 742.0,670.0 737.0,657.0 731.0,660.0 731.0,690.0 707.0,694.0 689.0,697.0 684.0,707.0 626.7,820.0 556.7,786.7 510.0,733.3 466.7,673.3 390.0,563.0 388.9,557.8"/></clipPath>
<g clip-path="url(#sc)">
<path d="M531.1 568.9C537.3 565.4 557.5 579.6 564.4 586.7C571.3 593.8 563.8 597.7 565.6 604.4C567.4 611.1 566.0 618.7 573.3 620.0C580.6 621.3 592.0 615.5 602.2 611.1C612.4 606.7 619.1 596.9 624.4 597.8C629.7 598.7 626.2 608.5 628.9 615.6C631.6 622.7 638.7 625.6 637.8 633.3C636.9 641.0 631.5 649.1 624.4 654.0C617.3 658.9 611.1 656.8 602.2 658.0C593.3 659.2 588.9 660.5 580.0 660.0C571.1 659.5 564.5 659.2 557.8 655.6C551.1 652.0 550.3 648.4 546.7 642.2C543.1 636.0 542.7 632.0 540.0 624.4C537.3 616.8 535.1 615.5 533.3 604.4C531.5 593.3 524.9 572.4 531.1 568.9Z" fill="#c39e98" />
<path d="M598.7 553.3C598.2 549.8 599.5 545.6 601.0 542.7C602.5 539.8 606.0 538.5 608.0 536.0C610.0 533.5 608.5 528.2 613.0 528.0C617.5 527.8 628.9 531.5 634.7 535.0C640.5 538.5 643.3 542.4 648.0 549.0C652.7 555.6 659.5 567.9 663.0 574.7C666.5 581.5 666.2 588.1 669.0 590.0C671.8 591.9 677.0 586.3 680.0 586.0C683.0 585.7 685.2 586.2 686.7 588.0C688.2 589.8 688.0 593.9 689.0 597.0C690.0 600.1 691.2 604.4 693.0 606.7C694.8 609.0 696.0 610.3 700.0 610.7C704.0 611.1 713.3 609.0 717.0 609.0C720.7 609.0 720.0 608.4 722.0 610.7C724.0 613.0 727.7 617.8 729.0 622.7C730.3 627.6 734.0 637.1 730.0 640.0C726.0 642.9 707.8 636.7 705.0 640.0C702.2 643.3 711.8 654.5 713.0 660.0C714.2 665.5 712.8 668.8 712.0 673.0C711.2 677.2 710.5 682.0 708.0 685.0C705.5 688.0 700.2 688.9 697.0 690.7C693.8 692.5 691.3 693.3 689.0 696.0C686.7 698.7 686.7 703.0 683.0 707.0C679.3 711.0 672.5 715.8 667.0 720.0C661.5 724.2 655.7 728.7 650.0 732.0C644.3 735.3 639.2 739.8 633.0 740.0C626.8 740.2 619.0 738.5 613.0 733.0C607.0 727.5 600.3 716.7 597.0 707.0C593.7 697.3 590.8 681.5 593.0 675.0C595.2 668.5 603.7 670.7 610.0 668.0C616.3 665.3 625.2 663.7 631.0 659.0C636.8 654.3 644.8 649.8 645.0 640.0C645.2 630.2 636.0 609.5 632.0 600.0C628.0 590.5 625.7 589.0 621.0 583.0C616.3 577.0 607.7 569.0 604.0 564.0C600.3 559.0 599.2 556.8 598.7 553.3Z" fill="#c39e98" />
<path d="M562.2 568.9C564.0 565.8 569.7 564.6 573.3 566.7C576.9 568.8 577.3 571.6 577.8 577.8C578.3 584.0 577.2 587.1 575.6 593.3C574.0 599.5 573.2 603.4 571.1 604.4C569.0 605.4 568.0 603.5 566.7 597.8C565.4 592.1 566.6 586.7 565.6 580.0C564.6 573.3 560.4 572.0 562.2 568.9Z" fill="#231d3a" />
<path d="M622.2 571.1C624.2 568.9 627.1 568.4 631.1 573.3C635.1 578.2 636.9 587.1 642.2 595.6C647.5 604.1 651.1 610.1 657.8 615.6C664.5 621.1 670.7 620.2 675.6 623.3C680.5 626.4 682.2 628.2 682.2 631.1C682.2 634.0 680.5 634.7 675.6 637.8C670.7 640.9 666.7 642.7 657.8 646.7C648.9 650.7 638.0 656.0 631.1 657.8C624.2 659.6 622.4 660.5 623.3 655.6C624.2 650.7 634.5 643.5 635.6 633.3C636.7 623.1 631.8 614.2 628.9 604.4C626.0 594.6 622.4 591.1 621.1 584.4C619.8 577.7 620.2 573.3 622.2 571.1Z" fill="#231d3a" />
</g>
<path d="M606.0 521.0L611.0 536.0" fill="none" stroke="#231d3a" stroke-width="5.2" stroke-linecap="round"/>
<polyline points="429.0,529.0 470.0,585.0 535.6,669.0 556.0,673.0 580.0,671.0 610.0,664.0 624.0,656.0" fill="none" stroke="#231d3a" stroke-width="2.21" stroke-linecap="round" stroke-linejoin="round" />
<polyline points="404.0,560.0 440.0,628.0 491.0,704.0" fill="none" stroke="#231d3a" stroke-width="1.9500000000000002" stroke-linecap="round" stroke-linejoin="round" />
<polyline points="593.0,676.0 580.0,668.0 560.0,660.0" fill="none" stroke="#a0607a" stroke-width="1.8199999999999998" stroke-linecap="round" stroke-linejoin="round" />
<path d="M606.0 521.0C609.2 530.3 612.1 540.3 618.0 556.0C623.9 571.7 625.3 573.6 628.0 580.0" fill="none" stroke="#231d3a" stroke-width="2.08" stroke-linecap="round" stroke-linejoin="round" />
<path d="M640.0 556.0C642.7 553.9 646.0 550.9 650.0 548.0C654.0 545.1 653.7 545.8 655.0 545.0" fill="none" stroke="#231d3a" stroke-width="1.9500000000000002" stroke-linecap="round" stroke-linejoin="round" />
<path d="M652.0 555.0C651.7 559.0 651.3 562.5 651.0 570.0C650.7 577.5 651.0 579.5 651.0 583.0" fill="none" stroke="#231d3a" stroke-width="1.9500000000000002" stroke-linecap="round" stroke-linejoin="round" />
<path d="M646.0 600.0C649.7 603.2 651.5 604.5 660.0 612.0C668.5 619.5 670.0 617.9 678.0 628.0C686.0 638.1 684.7 636.1 690.0 650.0C695.3 663.9 695.9 672.0 698.0 680.0" fill="none" stroke="#231d3a" stroke-width="1.9500000000000002" stroke-linecap="round" stroke-linejoin="round" />
<path d="M669.0 592.0C673.5 598.9 677.7 606.3 686.0 618.0C694.3 629.7 694.7 624.8 700.0 636.0C705.3 647.2 704.4 653.6 706.0 660.0" fill="none" stroke="#231d3a" stroke-width="1.9500000000000002" stroke-linecap="round" stroke-linejoin="round" />
<path d="M690.0 600.0C692.7 606.9 698.1 623.3 700.0 626.0C701.9 628.7 693.0 608.9 697.0 610.0C701.0 611.1 707.5 619.3 715.0 630.0C722.5 640.7 722.3 644.7 725.0 650.0" fill="none" stroke="#231d3a" stroke-width="1.8199999999999998" stroke-linecap="round" stroke-linejoin="round" />
<path d="M700.0 650.0C698.7 658.0 697.7 668.0 695.0 680.0C692.3 692.0 691.3 691.0 690.0 695.0" fill="none" stroke="#231d3a" stroke-width="1.9500000000000002" stroke-linecap="round" stroke-linejoin="round" />
<path d="M717.0 646.0C715.7 657.7 713.3 678.3 712.0 690.0" fill="none" stroke="#231d3a" stroke-width="1.6900000000000002" stroke-linecap="round" stroke-linejoin="round" />
<path d="M731.0 660.0C733.9 670.7 736.4 685.1 742.0 700.0C747.6 714.9 749.3 711.7 752.0 716.0" fill="none" stroke="#231d3a" stroke-width="1.9500000000000002" stroke-linecap="round" stroke-linejoin="round" />
<polyline points="467.0,645.0 491.6,654.9 489.4,680.4 515.9,690.6 511.9,715.9 537.6,725.0 534.3,751.3 557.3,759.9 556.7,786.7" fill="none" stroke="#231d3a" stroke-width="1.8199999999999998" stroke-linecap="round" stroke-linejoin="round" />
<polyline points="506.7,733.8 542.0,748.0 586.7,752.4 624.0,742.7 657.8,723.0 684.0,709.0" fill="none" stroke="#231d3a" stroke-width="1.9500000000000002" stroke-linecap="round" stroke-linejoin="round" />
<polyline points="559.0,751.6 561.8,780.0 583.0,758.7" fill="none" stroke="#231d3a" stroke-width="1.9500000000000002" stroke-linecap="round" stroke-linejoin="round" />
<polyline points="593.8,757.0 604.4,805.0 624.0,742.7 645.0,780.0" fill="none" stroke="#231d3a" stroke-width="1.9500000000000002" stroke-linecap="round" stroke-linejoin="round" />
<path d="M647.0 733.8L647.0 774.7M656.0 728.0L664.0 760.0M668.0 720.0L672.0 745.0" fill="none" stroke="#231d3a" stroke-width="1.8199999999999998" stroke-linecap="round"/>
<path d="M440.0 575.0L452.0 590.0M452.0 590.0L462.0 577.0M418.0 585.0L430.0 603.0M430.0 603.0L433.0 584.0M455.0 605.0L470.0 622.0M470.0 622.0L474.0 604.0M440.0 640.0L452.0 655.0M452.0 655.0L460.0 640.0M480.0 640.0L494.0 660.0M494.0 660.0L500.0 641.0M505.0 600.0L515.0 625.0M515.0 625.0L520.0 597.0M470.0 560.0L482.0 580.0M482.0 580.0L492.0 566.0M500.0 570.0L508.0 590.0M508.0 590.0L517.0 575.0M520.0 690.0L533.0 710.0M533.0 710.0L540.0 690.0M542.0 716.0L545.8 737.0M545.8 737.0L567.0 721.0M586.7 728.4L601.0 749.8M601.0 749.8L608.0 726.0M500.0 700.0L512.0 722.0M512.0 722.0L520.0 704.0M480.0 670.0L492.0 690.0M492.0 690.0L497.0 672.0M620.0 690.0L633.0 712.0M633.0 712.0L640.0 690.0M650.0 680.0L657.0 700.0M657.0 700.0L668.0 684.0M610.0 700.0L618.0 722.0M618.0 722.0L628.0 704.0" fill="none" stroke="#231d3a" stroke-width="1.8199999999999998" stroke-linecap="round"/>
<path d="M583.0 590.0L588.0 655.0M600.0 610.0L596.0 658.0M573.0 620.0L578.0 660.0M520.0 585.0L522.0 640.0M545.0 590.0L530.0 640.0M610.0 615.0L618.0 655.0M510.0 705.0L529.8 717.8" fill="none" stroke="#231d3a" stroke-width="1.8199999999999998" stroke-linecap="round"/>
<polygon points="821.0,776.5 822.7,818.7 873.0,795.0" fill="#8c566e" />
<polygon points="920.0,797.0 946.0,797.0 936.7,836.0 920.0,882.7 903.0,922.7 890.0,952.7 873.0,953.5 853.0,942.7 840.0,928.0 850.0,920.0 863.0,909.0 856.7,896.0 866.7,882.7 863.0,866.0 883.0,852.7 900.0,836.0 893.0,826.0 900.0,809.0 906.0,803.0" fill="#8c566e" />
<polygon points="736.7,789.0 760.0,802.7 786.7,856.0 806.7,892.7 770.0,909.0 756.7,862.7 743.0,816.0" fill="#8c566e" />
<path d="M726.7 640.0C733.1 650.0 734.2 651.7 746.0 670.0C757.8 688.3 751.9 677.1 762.0 695.0C772.1 712.9 766.3 706.4 776.4 723.6C786.5 740.8 779.3 731.9 792.4 746.7C805.5 761.5 799.1 756.9 815.6 768.0C832.1 779.1 821.3 772.7 842.0 780.0C862.7 787.3 854.1 785.1 877.8 790.0C901.5 794.9 890.6 792.8 913.0 794.7C935.4 796.6 934.3 795.3 945.0 795.6" fill="none" stroke="#231d3a" stroke-width="2.3400000000000003" stroke-linecap="round" stroke-linejoin="round" />
<polyline points="951.6,789.0 945.0,795.6 948.0,800.0 936.7,836.0 920.0,882.7 903.0,922.7 890.0,952.7 873.0,954.0 853.0,942.7 840.0,929.0 820.0,906.0 806.7,892.7 770.0,909.0" fill="none" stroke="#231d3a" stroke-width="2.6" stroke-linecap="round" stroke-linejoin="round" />
<polyline points="740.0,789.0 760.0,802.7 786.7,856.0 806.7,892.7" fill="none" stroke="#231d3a" stroke-width="2.08" stroke-linecap="round" stroke-linejoin="round" />
<polyline points="735.6,787.6 744.0,819.6 756.7,862.7 770.0,909.0 780.0,952.7 786.7,976.0" fill="none" stroke="#231d3a" stroke-width="2.3400000000000003" stroke-linecap="round" stroke-linejoin="round" />
<path d="M821.0 776.5L822.7 818.7M822.7 818.7L873.0 795.0M873.0 795.0L880.0 822.0M760.0 840.0L775.0 880.0M766.0 842.0L781.0 878.0M772.0 846.0L787.0 874.0M778.0 850.0L792.0 872.0" fill="none" stroke="#231d3a" stroke-width="1.9500000000000002" stroke-linecap="round"/>
<path d="M946.0 800.0C939.0 802.0 927.7 800.0 925.0 806.0C922.3 812.0 941.3 814.0 938.0 818.0C934.7 822.0 917.0 813.3 915.0 818.0C913.0 822.7 935.3 827.3 932.0 832.0C928.7 836.7 907.0 827.3 905.0 832.0C903.0 836.7 928.7 841.3 926.0 846.0C923.3 850.7 899.0 841.3 897.0 846.0C895.0 850.7 923.0 856.0 920.0 860.0C917.0 864.0 890.0 853.3 888.0 858.0C886.0 862.7 916.7 869.3 914.0 874.0C911.3 878.7 882.0 867.3 880.0 872.0C878.0 876.7 910.7 883.3 908.0 888.0C905.3 892.7 874.7 881.3 872.0 886.0C869.3 890.7 902.0 897.3 900.0 902.0C898.0 906.7 867.7 895.3 866.0 900.0C864.3 904.7 897.7 911.3 895.0 916.0C892.3 920.7 860.3 909.3 858.0 914.0C855.7 918.7 890.7 926.0 888.0 930.0C885.3 934.0 852.7 921.3 850.0 926.0C847.3 930.7 881.3 940.7 880.0 944.0C878.7 947.3 857.3 938.7 846.0 936.0" fill="none" stroke="#3a2c4a" stroke-width="1.9500000000000002" stroke-linecap="round" stroke-linejoin="round" />
<path d="M951.6 789.0C952.8 791.9 953.2 797.6 956.0 800.0C958.8 802.4 960.4 798.5 962.0 798.0" fill="none" stroke="#231d3a" stroke-width="1.56" stroke-linecap="round" stroke-linejoin="round" />
<path d="M747.0 742.0L763.0 736.0M731.0 750.0L752.0 757.0M783.0 770.0L815.0 762.0M741.0 787.0L780.0 778.0M780.0 778.0L772.0 812.0M798.0 822.0L828.0 812.0M828.0 812.0L821.0 870.0M744.0 700.0L748.0 745.0M788.0 748.0L790.0 765.0M700.0 720.0L706.0 790.0M704.0 800.0L705.0 845.0M702.0 855.0L704.0 880.0" fill="none" stroke="#231d3a" stroke-width="1.9500000000000002" stroke-linecap="round"/>
<path d="M707.6 705.0C710.4 709.8 714.2 712.6 718.0 723.0C721.8 733.4 719.9 736.0 721.8 744.0C723.7 752.0 721.2 741.0 725.0 753.0C728.8 765.0 733.1 779.4 736.0 789.0" fill="none" stroke="#231d3a" stroke-width="1.9500000000000002" stroke-linecap="round" stroke-linejoin="round" />
<path d="M625.8 831.6L581.0 877.8" fill="none" stroke="#231d3a" stroke-width="2.8600000000000003" stroke-linecap="round"/>
<path d="M681.0 742.7L645.0 805.0M675.6 773.0L647.0 807.0M691.6 748.0L682.7 787.0M554.7 794.0L506.7 874.0" fill="none" stroke="#231d3a" stroke-width="1.8199999999999998" stroke-linecap="round"/>
<path d="M500.0 889.0L550.0 893.0M560.0 889.0L620.0 843.0M620.0 843.0L683.0 736.0M513.0 913.0L620.0 898.0M513.0 913.0L523.0 943.0M533.0 953.0L537.0 973.0M530.0 999.0L663.0 969.0" fill="none" stroke="#231d3a" stroke-width="2.08" stroke-linecap="round"/>
<path d="M543.0 926.0L620.0 909.0" fill="none" stroke="#5a4460" stroke-width="3.9000000000000004" stroke-linecap="round"/>
<polyline points="647.0,869.0 663.0,903.0 650.0,939.0 633.0,916.0 647.0,869.0" fill="none" stroke="#231d3a" stroke-width="2.08" stroke-linecap="round" stroke-linejoin="round" />
<path d="M645.0 900.0C646.9 898.4 649.3 892.7 652.0 894.0C654.7 895.3 656.1 900.2 655.0 905.0C653.9 909.8 649.9 910.1 648.0 912.0" fill="none" stroke="#231d3a" stroke-width="1.8199999999999998" stroke-linecap="round" stroke-linejoin="round" />
<path d="M655.0 946.0L648.0 972.0M655.0 946.0L662.0 968.0M686.0 939.0L676.0 990.0M706.0 910.0L690.0 985.0" fill="none" stroke="#231d3a" stroke-width="1.9500000000000002" stroke-linecap="round"/>
<polyline points="700.0,870.0 705.0,940.0 712.0,965.0" fill="none" stroke="#231d3a" stroke-width="1.9500000000000002" stroke-linecap="round" stroke-linejoin="round" />
<path d="M731.0 925.0L744.0 917.0M731.0 958.0L752.0 946.0" fill="none" stroke="#231d3a" stroke-width="1.9500000000000002" stroke-linecap="round"/>
<polygon points="749.0,1004.0 755.6,986.7 769.0,975.6 780.0,971.0 786.7,980.0 795.0,985.0 782.0,984.0 768.0,991.0 758.0,1004.0" fill="#9ba5a5" stroke="#4a4660" stroke-width="1.2" stroke-linejoin="round" />
<polygon points="770.0,909.0 784.4,957.8 791.0,977.8 817.8,986.7 826.7,995.6 844.4,993.0 857.8,1002.0 866.7,1013.0 760.0,1013.0 770.0,990.0" fill="#d1cfb6" />
<polygon points="749.0,1004.0 755.6,986.7 769.0,975.6 780.0,971.0 786.7,980.0 795.0,985.0 782.0,984.0 768.0,991.0 758.0,1004.0" fill="#9ba5a5" stroke="#4a4660" stroke-width="1.2" stroke-linejoin="round" />
<polyline points="770.0,909.0 784.4,957.8 791.0,977.8 817.8,986.7 826.7,995.6 844.4,993.0 857.8,1002.0 866.7,1013.0" fill="none" stroke="#231d3a" stroke-width="2.3400000000000003" stroke-linecap="round" stroke-linejoin="round" />
<path d="M778.0 1000.0L800.0 996.0M800.0 1004.0L830.0 1000.0M853.0 993.0L880.0 995.0" fill="none" stroke="#231d3a" stroke-width="1.6900000000000002" stroke-linecap="round"/>
<polygon points="613.0,1003.0 702.0,984.4 702.0,1013.0 604.0,1013.0" fill="#f0c9b0" />
<polygon points="688.0,983.0 704.0,973.0 703.0,986.0" fill="#8c566e" />
<polyline points="533.0,1008.0 613.0,1003.0 702.0,984.4 728.0,980.0" fill="none" stroke="#231d3a" stroke-width="2.08" stroke-linecap="round" stroke-linejoin="round" />
<polyline points="704.0,973.0 702.0,1013.0" fill="none" stroke="#231d3a" stroke-width="1.9500000000000002" stroke-linecap="round" stroke-linejoin="round" />
<path d="M628.0 1013.0L634.0 1006.0M650.0 1013.0L655.0 1004.0M668.0 1013.0L668.0 1002.0M684.0 1013.0L684.0 1000.0" fill="none" stroke="#231d3a" stroke-width="3.25" stroke-linecap="round"/>
<polygon points="942.3,1012.6 945.3,974.9 948.4,940.1 963.5,933.3 978.6,932.5 980.1,920.5 984.6,902.3 989.2,895.5 1040.5,881.9 1043.6,905.3 1060.2,904.6 1075.3,922.0 1069.3,938.6 1072.3,950.7 1069.3,988.5 1070.8,1012.6" fill="#e0a9a4" />
<clipPath id="fs"><polygon points="942.3,1012.6 945.3,974.9 948.4,940.1 963.5,933.3 978.6,932.5 980.1,920.5 984.6,902.3 989.2,895.5 1040.5,881.9 1043.6,905.3 1060.2,904.6 1075.3,922.0 1069.3,938.6 1072.3,950.7 1069.3,988.5 1070.8,1012.6"/></clipPath><g clip-path="url(#fs)">
<polygon points="989.2,903.8 990.7,894.8 1040.5,881.2 1045.1,905.3 1060.2,903.8 1076.8,922.0 1070.8,938.6 1073.8,950.7 1070.8,988.5 1072.3,1014.1 1020.9,1014.1 1008.8,983.9 1014.9,953.7 1002.8,944.6 996.7,926.5" fill="#eccdb4" />
<polygon points="996.7,950.7 1004.3,956.7 1010.3,980.9 1020.9,1014.1 981.6,1014.1 984.6,996.0 990.7,971.8" fill="#a87482" />
<polygon points="1002.8,938.6 1014.9,932.5 1019.4,950.7 1011.8,977.9 1005.8,956.7" fill="#c9a59a" />
<polygon points="1020.9,953.7 1048.1,949.2 1051.1,952.2 1030.0,968.8 1011.8,979.4 1016.4,962.8" fill="#2f2645" />
</g>
<polygon points="942.3,1012.6 945.3,974.9 948.4,940.1 963.5,933.3 978.6,932.5 980.1,920.5 984.6,902.3 989.2,895.5 1040.5,881.9 1043.6,905.3 1060.2,904.6 1075.3,922.0 1069.3,938.6 1072.3,950.7 1069.3,988.5 1070.8,1012.6" fill="none" stroke="#231d3a" stroke-width="2.2" stroke-linejoin="round" />
<polyline points="1016.4,931.0 1054.1,906.8" fill="none" stroke="#231d3a" stroke-width="2.21" stroke-linecap="round" stroke-linejoin="round" />
<polyline points="1054.1,906.8 1043.6,905.3" fill="none" stroke="#231d3a" stroke-width="1.9500000000000002" stroke-linecap="round" stroke-linejoin="round" />
<polyline points="1030.0,890.2 1036.0,891.7 1038.3,902.3" fill="none" stroke="#231d3a" stroke-width="1.9500000000000002" stroke-linecap="round" stroke-linejoin="round" />
<polyline points="1016.4,931.0 1020.9,935.6 1014.9,938.6" fill="none" stroke="#231d3a" stroke-width="1.9500000000000002" stroke-linecap="round" stroke-linejoin="round" />
<polyline points="1019.4,950.7 1048.1,949.2 1066.2,941.6" fill="none" stroke="#231d3a" stroke-width="2.08" stroke-linecap="round" stroke-linejoin="round" />
<polyline points="1011.8,979.4 1005.8,990.0 998.2,993.0 999.7,1005.1 1008.8,1009.6" fill="none" stroke="#231d3a" stroke-width="2.08" stroke-linecap="round" stroke-linejoin="round" />
<path d="M966.5 965.8C969.7 967.4 972.1 970.6 978.6 971.8C985.0 973.0 987.5 970.7 990.7 970.3" fill="none" stroke="#231d3a" stroke-width="2.21" stroke-linecap="round" stroke-linejoin="round" />
<path d="M971.0 958.2L975.6 968.8M974.1 974.9L972.5 980.9M987.7 980.9L972.5 1012.6M987.7 979.4L990.7 996.0M980.1 920.5L990.7 944.6M990.7 944.6L996.7 949.2" fill="none" stroke="#231d3a" stroke-width="2.08" stroke-linecap="round"/>
<path d="M259 184 Q240 160 212 153.500 Q199 152 204 160 Q218 180 246 184.500 Q252 184 250 181" fill="none" stroke="#231d3a" stroke-width="1.700" stroke-linecap="round"/>
<path d="M61.500 260.500 L64.500 257.500 Q92 284 126 311.500 Q90 288 61.500 260.500Z" fill="#231d3a" stroke="#231d3a" stroke-width="1.200" stroke-linejoin="round"/>
<path d="M153 438 Q170 455 190.800 470 Q172 452 153 438Z" fill="#231d3a" stroke="#231d3a" stroke-width="1.600" stroke-linejoin="round"/>
<path d="M72.500 713 Q77 711.500 88 720 Q102 731 111 745 Q117 754 120.500 761.500 Q113 752 106 746.500 Q90 735 77 722.500 Q71.500 716 72.500 713Z" fill="#34223c"/><path d="M77 717.500 Q92 727 107 743.500 Q90 731 77 717.500Z" fill="#a5607c" stroke="#a5607c" stroke-width="0.800"/>
<path d="M855 546 Q838 520 822 517.500 Q815 519 820 528 Q830 545 846 547.500 Q851 546 849 542" fill="none" stroke="#231d3a" stroke-width="1.700" stroke-linecap="round"/>
<path d="M1005 732.500 Q1032 741 1054 755 L1077 768 L1052 757.500 Q1026 746 1005 732.500Z" fill="#4a2c3c" stroke="#3a2438" stroke-width="1.500" stroke-linejoin="round"/>
<path d="M1120 834 Q1132 852 1148 866" fill="none" stroke="#231d3a" stroke-width="1.400"/>
<path d="M513.0 945.0L524.0 1010.0" fill="none" stroke="#3a2c4a" stroke-width="4.16" stroke-linecap="round"/>
</svg></div>
<style>
#pshadow{left:1207px;top:17px;width:548px;height:838px;background:#1c1c1c}
#ptab{left:1208px;top:21px;width:545px;height:36px;background:#262626}
#ptab .tab{position:absolute;left:0;top:0;width:66px;height:36px;background:#2f2f2f;color:#e6e6e6;font-weight:bold;font-size:12.5px;line-height:34px;padding-left:12px;letter-spacing:-0.2px}
#pbody{left:1208px;top:57px;width:545px;height:758px;background:#2d2d2d}
#plist{left:1208px;top:57px;width:525px;height:156px;background:#323232}
#pcol1{left:1235px;top:57px;width:1px;height:156px;background:#2a2a2a}
.row{position:absolute;left:1208px;width:525px;height:25px;color:#e2e2e2;font-size:13.5px;line-height:26.5px;letter-spacing:-0.35px}
.row .sep{position:absolute;left:0;top:25px;width:525px;height:1px;background:#303030}
.row .bx{position:absolute;left:33px;top:4px;width:17px;height:17px;border:1px solid #2a2a2a;border-right-color:#3a3a3a;border-bottom-color:#3a3a3a;background:#303030}
.row .ck{position:absolute;left:8px;top:6px;width:14px;height:13px}
.row .lbl{position:absolute;top:0;white-space:nowrap}
.row .fk{position:absolute;left:501px;top:0;letter-spacing:-0.6px;font-size:12.5px}
.row .chev{position:absolute;top:6px;width:8px;height:13px}
.row .hl{position:absolute;left:97px;top:2px;width:428px;height:23px;background:#4b4b4b}
#pfoot{left:1208px;top:815px;width:545px;height:29px;background:#323232}
#pfootline{left:1208px;top:844px;width:545px;height:2px;background:#202020}
#pgrip{left:1208px;top:846px;width:545px;height:8px;background:#2f2f2f}
#below{left:1208px;top:855px;width:547px;height:158px;background:#1a1a1a}
#strack{left:1732px;top:855px;width:21px;height:158px;background:#2a2a2a}
#sthumb{left:1734px;top:856px;width:15px;height:89px;background:#4a4a4a}
</style>
<div id="pshadow" class="abs"></div>
<div id="ptab" class="abs"><div class="tab">Actions</div>
<svg class="abs" style="left:492px;top:10px" width="50" height="18" viewBox="0 0 50 18"><g fill="none" stroke="#a5a5a5" stroke-width="1.2"><path d="M2.5 4.5 L7 9 L2.5 13.5 M8.5 4.5 L13 9 L8.5 13.5"/><path d="M24.5 1.5 V16.5" stroke="#6a6a6a"/></g><g stroke="#a0a0a0" stroke-width="1.3"><path d="M33 4.6H47M33 7.6H47M33 10.6H47M33 13.6H47"/></g></svg>
</div>
<div id="pbody" class="abs"></div>
<div id="plist" class="abs"></div>
<div id="pcol1" class="abs"></div>
<div class="row" style="top:61.5px"><svg class="ck" viewBox="0 0 14 13"><path d="M1.5 7.2 L5 11 L12 1.8" fill="none" stroke="#ee2d2d" stroke-width="2.3"/></svg><div class="bx"></div><svg class="chev" style="left:60px;top:9px;width:13px;height:8px" viewBox="0 0 13 8"><path d="M1 1 L6.5 6.5 L12 1" fill="none" stroke="#9a9a9a" stroke-width="1.3"/></svg><svg class="abs" style="left:82px;top:5px" width="19" height="15" viewBox="0 0 19 15"><path d="M0.5 1.5 Q0.5 0.5 1.5 0.5 H7 L8.5 2.5 H17.5 Q18.5 2.5 18.5 3.5 V13.5 Q18.5 14.5 17.5 14.5 H1.5 Q0.5 14.5 0.5 13.5 Z" fill="#e4e4e4"/><path d="M1.5 5.6 H17.5" stroke="#323232" stroke-width="1.2"/><path d="M2 1.8 H6.5 L7.5 3.5 H2Z" fill="#323232"/></svg><div class="lbl" style="left:111px">comic-coloring-actions</div><div class="sep"></div></div>
<div class="row" style="top:86.9px"><svg class="ck" viewBox="0 0 14 13"><path d="M1.5 7.2 L5 11 L12 1.8" fill="none" stroke="#ee2d2d" stroke-width="2.3"/></svg><div class="bx"></div><svg class="chev" style="left:82px" viewBox="0 0 8 13"><path d="M1.5 1 L6.5 6.5 L1.5 12" fill="none" stroke="#a8a8a8" stroke-width="1.2"/></svg><div class="lbl" style="left:102px">separate line art</div><div class="fk">F5</div><div class="sep"></div></div>
<div class="row" style="top:112.3px"><div class="hl"></div><svg class="ck" viewBox="0 0 14 13"><path d="M1.5 7.2 L5 11 L12 1.8" fill="none" stroke="#ececec" stroke-width="2.3"/></svg><div class="bx"></div><svg class="chev" style="left:82px" viewBox="0 0 8 13"><path d="M1.5 1 L6.5 6.5 L1.5 12" fill="none" stroke="#a8a8a8" stroke-width="1.2"/></svg><div class="lbl" style="left:102px">expand and fill mask fg</div><div class="fk">F2</div><div class="sep"></div></div>
<div class="row" style="top:137.7px"><svg class="ck" viewBox="0 0 14 13"><path d="M1.5 7.2 L5 11 L12 1.8" fill="none" stroke="#ececec" stroke-width="2.3"/></svg><div class="bx"></div><svg class="chev" style="left:82px" viewBox="0 0 8 13"><path d="M1.5 1 L6.5 6.5 L1.5 12" fill="none" stroke="#a8a8a8" stroke-width="1.2"/></svg><div class="lbl" style="left:102px">expand and fill mask bg</div><div class="fk">F3</div><div class="sep"></div></div>
<div class="row" style="top:163.1px"><svg class="ck" viewBox="0 0 14 13"><path d="M1.5 7.2 L5 11 L12 1.8" fill="none" stroke="#ececec" stroke-width="2.3"/></svg><div class="bx"></div><svg class="chev" style="left:82px" viewBox="0 0 8 13"><path d="M1.5 1 L6.5 6.5 L1.5 12" fill="none" stroke="#a8a8a8" stroke-width="1.2"/></svg><div class="lbl" style="left:102px">expand and fill yellow</div><div class="fk">F4</div><div class="sep"></div></div>
<div class="row" style="top:188.5px"><svg class="ck" viewBox="0 0 14 13"><path d="M1.5 7.2 L5 11 L12 1.8" fill="none" stroke="#ececec" stroke-width="2.3"/></svg><div class="bx"></div><svg class="chev" style="left:82px" viewBox="0 0 8 13"><path d="M1.5 1 L6.5 6.5 L1.5 12" fill="none" stroke="#a8a8a8" stroke-width="1.2"/></svg><div class="lbl" style="left:102px">line helper</div><div class="sep"></div></div>
<div id="pfoot" class="abs">
<svg class="abs" style="left:300px;top:4px" width="220" height="22" viewBox="0 0 220 22">
<rect x="9.5" y="7" width="9" height="9" fill="#7b7b7b"/>
<circle cx="51" cy="11" r="6" fill="#e6e6e6"/>
<path d="M84.5 5 L96.5 11.5 L84.5 18 Z" fill="#e6e6e6"/>
<path d="M118 5.5 Q118 4.5 119 4.5 H124 L125.5 6.5 H132.5 Q133.5 6.500 133.5 7.5 V16.500 Q133.5 17.5 132.5 17.5 H119 Q118 17.5 118 16.500 Z" fill="#e6e6e6"/><path d="M119 6.2H124.500" stroke="#323232" stroke-width="0.9"/>
<rect x="160" y="4.500" width="13" height="13" fill="none" stroke="#e6e6e6" stroke-width="1.5"/><path d="M166.5 7.5V14.500M163 11H170" stroke="#e6e6e6" stroke-width="1.600"/>
<g fill="none" stroke="#e6e6e6" stroke-width="1.3"><path d="M196.500 7.5 V16 Q196.500 18 198.500 18 H206 Q208 18 208 16 V7.5"/><path d="M195 7H209.500" stroke-width="1.600"/><path d="M199.500 6.500 Q199.500 4 202.250 4 Q205 4 205 6.500"/><path d="M199.800 9.500V16M202.250 9.500V16M204.700 9.500V16" stroke-width="1.100"/></g>
</svg></div>
<div id="pfootline" class="abs"></div>
<div id="pgrip" class="abs"><div class="abs" style="left:258px;top:2px;width:27px;height:4px;background:repeating-linear-gradient(90deg,#252525 0 1px,#2f2f2f 1px 2px)"></div></div>
<div id="below" class="abs"></div><div id="strack" class="abs"></div><div id="sthumb" class="abs"></div>

<style>
#sline{left:1753px;top:0;width:2px;height:1013px;background:#1d1d1d}
#strip{left:1755px;top:0;width:45px;height:1013px;background:#323232}
#strip .top{position:absolute;left:0;top:0;width:45px;height:4px;background:#3b3b3b}
#strip .hd{position:absolute;left:0;top:4px;width:45px;height:16px;background:#2c2c2c}
.sb{position:absolute;left:0;width:45px;height:52px;border-top:2px solid #262626}
.sb .gr{position:absolute;left:12px;top:3px;width:25px;height:5px;background:repeating-linear-gradient(90deg,#262626 0 1px,#323232 1px 2px)}
.sb svg{position:absolute;left:0;top:-2px}
</style>
<div id="sline" class="abs"></div>
<div id="strip" class="abs"><div class="top"></div><div class="hd"><svg class="abs" style="left:29px;top:3px" width="12" height="9" viewBox="0 0 12 9"><path d="M5 0.800 L1.800 4.300 L5 7.800 M10 0.800 L6.800 4.300 L10 7.800" fill="none" stroke="#d6d6d6" stroke-width="1.500"/></svg></div>
<div class="sb" style="top:20px"><div class="gr"></div><svg width="45" height="52" viewBox="0 0 45 52"><rect x="6.5" y="15.5" width="35" height="29" rx="3.5" fill="#1f1f1f" stroke="#3d3d3d"/><path d="M16.5 20.500 L34.5 29.800 L16.500 39 Z" fill="#dcdcdc"/></svg></div>
<div class="sb" style="top:72px"><div class="gr"></div><svg width="45" height="52" viewBox="0 0 45 52"><path d="M11.5 36.5 V26.8 H12.5 V23.8 H13.5 V26.0 H14.5 V22.2 H15.5 V25.2 H16.5 V27.5 H17.5 V23.0 H18.5 V20.0 H19.5 V24.5 H20.5 V26.8 H21.5 V21.5 H22.5 V19.2 H23.5 V23.8 H24.5 V26.0 H25.5 V22.2 H26.5 V20.8 H27.5 V25.2 H28.5 V23.0 H29.5 V26.8 H30.5 V24.5 H31.5 V21.5 H32.5 V26.0 H33.5 V23.8 H34.5 V27.5 H35.5 V36.5 Z" fill="#dcdcdc"/></svg></div>
<div class="sb" style="top:124px"><div class="gr"></div><svg width="45" height="52" viewBox="0 0 45 52"><circle cx="23.300" cy="28.700" r="9.600" fill="none" stroke="#dcdcdc" stroke-width="2"/><rect x="22.200" y="27" width="2.300" height="7.500" fill="#dcdcdc"/><circle cx="23.350" cy="23.800" r="1.500" fill="#dcdcdc"/></svg></div>
<div class="sb" style="top:176px"><div class="gr"></div><svg width="45" height="52" viewBox="0 0 45 52"><circle cx="28" cy="32" r="5.800" fill="none" stroke="#dcdcdc" stroke-width="1.700"/><path d="M13.300 32.700 L20.300 20.500 L27.200 32.700 Z" fill="#dcdcdc" stroke="#323232" stroke-width="0.800"/></svg></div>
<div class="sb" style="top:228px"><div class="gr"></div><svg width="45" height="52" viewBox="0 0 45 52"><text x="23.500" y="39" font-family="'Liberation Serif',serif" font-style="italic" font-weight="bold" font-size="27" fill="#dcdcdc" text-anchor="middle">A</text></svg></div>
<div class="sb" style="top:280px"><div class="gr"></div><svg width="45" height="52" viewBox="0 0 45 52"><g stroke="#dcdcdc" fill="none" stroke-linecap="round"><path d="M16 40 L22 34" stroke-width="5"/><path d="M21.500 34.500 L33.500 21" stroke-width="2.300"/><path d="M17 24.500 L29.500 35.500" stroke-width="2.800" stroke-linecap="butt"/><circle cx="31.800" cy="37.300" r="2.800" stroke-width="2"/><path d="M19.300 20 A4.200 4.200 0 1 0 13 26.300" stroke-width="2.800"/></g></svg></div>
<div class="sb" style="top:332px"><div class="gr"></div><svg width="45" height="52" viewBox="0 0 45 52"><path d="M23.300 19.500 L32.500 24 V35 L23.300 40 L14 35 V24 Z" fill="#6a6a6a" stroke="#dcdcdc" stroke-width="1.700" stroke-linejoin="round"/><path d="M23.300 29 L32.500 24 V35 L23.300 40 Z" fill="#323232"/><path d="M14 24 L23.300 29 L32.500 24 M23.300 29 V40" fill="none" stroke="#dcdcdc" stroke-width="1.700"/><path d="M14 24 L23.300 19.500 L32.500 24 L23.300 29Z" fill="#4a4a4a" stroke="#dcdcdc" stroke-width="1.700" stroke-linejoin="round"/></svg></div>
<div class="sb" style="top:384px"><div class="gr"></div><svg width="45" height="52" viewBox="0 0 45 52"><rect x="13.500" y="20.500" width="16" height="17" rx="1" fill="none" stroke="#dcdcdc" stroke-width="1.500"/><rect x="16.500" y="23" width="17" height="17.500" rx="1" fill="#323232" stroke="#dcdcdc" stroke-width="1.500"/><path d="M25 23 H29.500 V31.500 L27.250 29.500 L25 31.500 Z" fill="#dcdcdc"/></svg></div>
<div class="sb" style="top:436px"><div class="gr"></div><svg width="45" height="52" viewBox="0 0 45 52"><circle cx="23.400" cy="30" r="9" fill="none" stroke="#dcdcdc" stroke-width="1.900"/><path d="M29.800 23.600 A9 9 0 0 1 17 36.400 Z" fill="#dcdcdc"/></svg></div>
<div class="sb" style="top:488px"><div class="gr"></div><svg width="45" height="52" viewBox="0 0 45 52"><g fill="none" stroke="#dcdcdc" stroke-width="1.400"><path d="M12 26.500 H36"/><path d="M15 40 Q15 27 24 26.500 Q33 27 33 40"/></g><rect x="10.500" y="23.500" width="5" height="5.500" fill="#dcdcdc"/><rect x="32.500" y="23.500" width="5" height="5.500" fill="#dcdcdc"/><rect x="22" y="24.500" width="4" height="4" fill="#dcdcdc"/><rect x="13" y="38" width="4.500" height="4.500" fill="#323232" stroke="#dcdcdc" stroke-width="1.300"/><rect x="30.500" y="38" width="4.500" height="4.500" fill="#323232" stroke="#dcdcdc" stroke-width="1.300"/></svg></div>
<div class="sb" style="top:540px"><div class="gr"></div><svg width="45" height="52" viewBox="0 0 45 52"><g fill="#dcdcdc"><rect x="10.500" y="20.500" width="2.600" height="2.600"/><rect x="10.500" y="24.500" width="2.600" height="2.600"/><rect x="10.500" y="28.500" width="2.600" height="2.600"/><rect x="14.800" y="21.200" width="5" height="1.300"/><rect x="14.800" y="25.200" width="5" height="1.300"/><rect x="14.800" y="29.200" width="5" height="1.300"/><path d="M36.200 23 L37.200 24.500 L27 34.500 L24.500 32 Z"/><path d="M23.500 33 L26 35.500 Q25 40.500 15.500 41.500 Q19.500 39 19.500 36 Q20.500 33 23.500 33 Z"/></g></svg></div>
<div class="sb" style="top:592px"><div class="gr"></div><svg width="45" height="52" viewBox="0 0 45 52"><g stroke="#dcdcdc" stroke-width="1.500" fill="#323232"><path d="M13 25 H33.500 M13 31.500 H33.500 M13 38 H33.500"/><circle cx="19" cy="25" r="2.500"/><circle cx="28" cy="31.500" r="2.500"/><circle cx="21.500" cy="38" r="2.500"/></g></svg></div>
<div class="sb" style="top:644px;height:2px"></div></div>

</div></body></html>
